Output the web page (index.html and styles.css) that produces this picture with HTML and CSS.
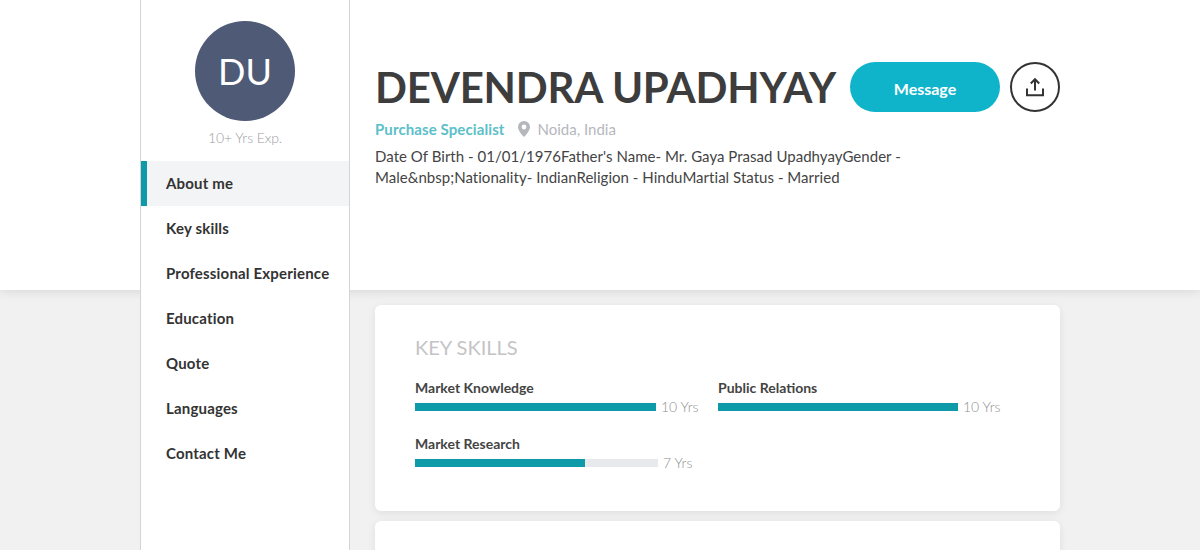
FILE: index.html
```html
<!DOCTYPE html>
<html lang="en">

<head>
    <meta charset="UTF-8">
    <meta name="viewport" content="width=device-width, initial-scale=1.0">
    <title>Devendra Upadhyay - Profile</title>
    <link rel="stylesheet" href="styles.css">
</head>

<body>
    <div class="page">
        <div class="top-band"></div>

        <!-- Left menu -->
        <aside class="sidebar">
            <div class="avatar">DU</div>
            <p class="experience">10+ Yrs Exp.</p>
            <nav class="side-nav">
                <a href="#" class="side-link active">About me</a>
                <a href="#" class="side-link">Key skills</a>
                <a href="#" class="side-link">Professional Experience</a>
                <a href="#" class="side-link">Education</a>
                <a href="#" class="side-link">Quote</a>
                <a href="#" class="side-link">Languages</a>
                <a href="#" class="side-link">Contact Me</a>
            </nav>
        </aside>

        <!-- Profile header -->
        <header class="profile">
            <div class="profile-top">
                <h1 class="profile-name">DEVENDRA UPADHYAY</h1>
                <button class="message-btn">Message</button>
                <button class="share-btn" aria-label="Share">
                    <svg width="20" height="20" viewBox="0 0 20 20" fill="none" stroke="#333" stroke-width="2">
                        <path d="M10 13.5V2.5M5.8 6.5L10 2.2l4.2 4.3M2 11.5v6.7h16v-6.7" />
                    </svg>
                </button>
            </div>
            <div class="profile-meta">
                <span class="profile-role">Purchase Specialist</span>
                <svg class="pin-icon" width="12" height="16" viewBox="0 0 12 16">
                    <path fill-rule="evenodd" fill="#b5b7bd" d="M6 0a6 6 0 0 1 6 6c0 3.2-3.6 7.8-6 10C3.600 13.800 0 9.200 0 6a6 6 0 0 1 6-6zm0 3.600a2.400 2.400 0 1 0 0 4.800 2.400 2.400 0 0 0 0-4.800z" />
                </svg>
                <span class="profile-location">Noida, India</span>
            </div>
            <p class="profile-about">Date Of Birth - 01/01/1976Father's Name- Mr. Gaya Prasad UpadhyayGender - Male&amp;nbsp;Nationality- IndianReligion - HinduMartial Status - Married</p>
        </header>

        <main class="content">
            <section class="card">
                <h2 class="card-title">KEY SKILLS</h2>
                <div class="skills">
                    <div class="skill">
                        <h3 class="skill-name">Market Knowledge</h3>
                        <div class="skill-row">
                            <div class="skill-track" style="width: 241px"><div class="skill-fill" style="width: 100%"></div></div>
                            <span class="skill-years">10 Yrs</span>
                        </div>
                    </div>
                    <div class="skill">
                        <h3 class="skill-name">Public Relations</h3>
                        <div class="skill-row">
                            <div class="skill-track" style="width: 240px"><div class="skill-fill" style="width: 100%"></div></div>
                            <span class="skill-years">10 Yrs</span>
                        </div>
                    </div>
                    <div class="skill">
                        <h3 class="skill-name">Market Research</h3>
                        <div class="skill-row">
                            <div class="skill-track" style="width: 243px"><div class="skill-fill" style="width: 70%"></div></div>
                            <span class="skill-years">7 Yrs</span>
                        </div>
                    </div>
                </div>
            </section>
            <section class="card card-empty"></section>
        </main>
    </div>
</body>

</html>
```

FILE: styles.css
```css
* {
    margin: 0;
    padding: 0;
    box-sizing: border-box;
    font-family: 'Lato', 'Liberation Sans', sans-serif;
}

html,
body {
    height: 550px;
    overflow: hidden;
}

body {
    background-color: #f1f1f1;
    color: #3d3d3d;
}

.page {
    display: grid;
    grid-template-columns: 140px 210px 25px 685px 1fr;
    grid-template-rows: 290px 260px;
    height: 550px;
    overflow: hidden;
}

.top-band {
    grid-column: 1 / -1;
    grid-row: 1;
    background-color: #fff;
    box-shadow: 0 2px 10px rgba(0, 0, 0, 0.1);
}

.sidebar {
    grid-column: 2;
    grid-row: 1 / 3;
    position: relative;
    background-color: #fff;
    border-left: 1px solid #d4d4d4;
    border-right: 1px solid #d4d4d4;
    padding-top: 21px;
    display: flex;
    flex-direction: column;
    align-items: center;
}

.avatar {
    width: 100px;
    height: 100px;
    border-radius: 50%;
    background-color: #4e5a76;
    color: #fff;
    font-size: 36px;
    font-weight: 400;
    display: flex;
    align-items: center;
    justify-content: center;
}

.experience {
    margin-top: 8px;
    font-size: 14px;
    line-height: 17px;
    letter-spacing: -0.1px;
    font-weight: 300;
    color: #9d9da2;
}

.side-nav {
    width: 100%;
    margin-top: 15px;
    display: flex;
    flex-direction: column;
}

.side-link {
    height: 45px;
    padding-left: 25px;
    padding-bottom: 2px;
    display: flex;
    align-items: center;
    font-size: 15px;
    letter-spacing: 0.18px;
    font-weight: 700;
    color: #333;
    text-decoration: none;
    white-space: nowrap;
}

.side-link.active {
    background-color: #f3f4f6;
    border-left: 6px solid #0f9aaa;
    padding-left: 19px;
}

.profile {
    grid-column: 4;
    grid-row: 1;
    position: relative;
    padding-top: 62px;
}

.profile-top {
    display: flex;
    align-items: center;
    gap: 10px;
}

.profile-name {
    width: 461px;
    flex-shrink: 0;
    font-size: 42px;
    line-height: 50px;
    letter-spacing: -0.2px;
    font-weight: 700;
    color: #3d3d3d;
    white-space: nowrap;
    margin-right: 4px;
}

.message-btn {
    width: 150px;
    height: 50px;
    flex-shrink: 0;
    padding-top: 2px;
    border: none;
    border-radius: 25px;
    background-color: #0fb4cb;
    color: #fff;
    font-size: 16px;
    font-weight: 700;
    cursor: pointer;
}

.share-btn {
    width: 50px;
    height: 50px;
    flex-shrink: 0;
    border: 2px solid #333;
    border-radius: 50%;
    background-color: #fff;
    display: flex;
    align-items: center;
    justify-content: center;
    cursor: pointer;
}

.profile-meta {
    margin-top: 8px;
    display: flex;
    align-items: center;
    font-size: 15px;
    line-height: 18px;
}

.profile-role {
    font-weight: 700;
    letter-spacing: 0.1px;
    color: #5cc0c9;
}

.pin-icon {
    margin-left: 13px;
    margin-right: 8px;
}

.profile-location {
    color: #b5b7bd;
}

.profile-about {
    margin-top: 8px;
    width: 560px;
    font-size: 15px;
    line-height: 21px;
    letter-spacing: 0.03px;
    color: #444;
}

.content {
    grid-column: 4;
    grid-row: 2;
    padding-top: 15px;
    display: flex;
    flex-direction: column;
    gap: 10px;
}

.card {
    background-color: #fff;
    border-radius: 6px;
    box-shadow: 0 2px 8px rgba(0, 0, 0, 0.08);
    padding: 29px 40px;
    height: 206px;
    flex-shrink: 0;
}

.card-title {
    font-size: 20px;
    line-height: 26px;
    font-weight: 400;
    color: #c4c4c6;
}

.skills {
    margin-top: 19px;
    display: grid;
    grid-template-columns: 283px 282px;
    column-gap: 20px;
    row-gap: 19px;
}

.skill-name {
    font-size: 14px;
    line-height: 17px;
    font-weight: 700;
    color: #444;
}

.skill-row {
    margin-top: 2px;
    display: flex;
    align-items: center;
    gap: 5px;
}

.skill-track {
    flex-shrink: 0;
    height: 8px;
    background-color: #e8e9ec;
}

.skill-fill {
    height: 100%;
    background-color: #0f9aaa;
}

.skill-years {
    font-size: 14px;
    line-height: 18px;
    font-weight: 300;
    color: #8f8f8f;
    white-space: nowrap;
}
```
